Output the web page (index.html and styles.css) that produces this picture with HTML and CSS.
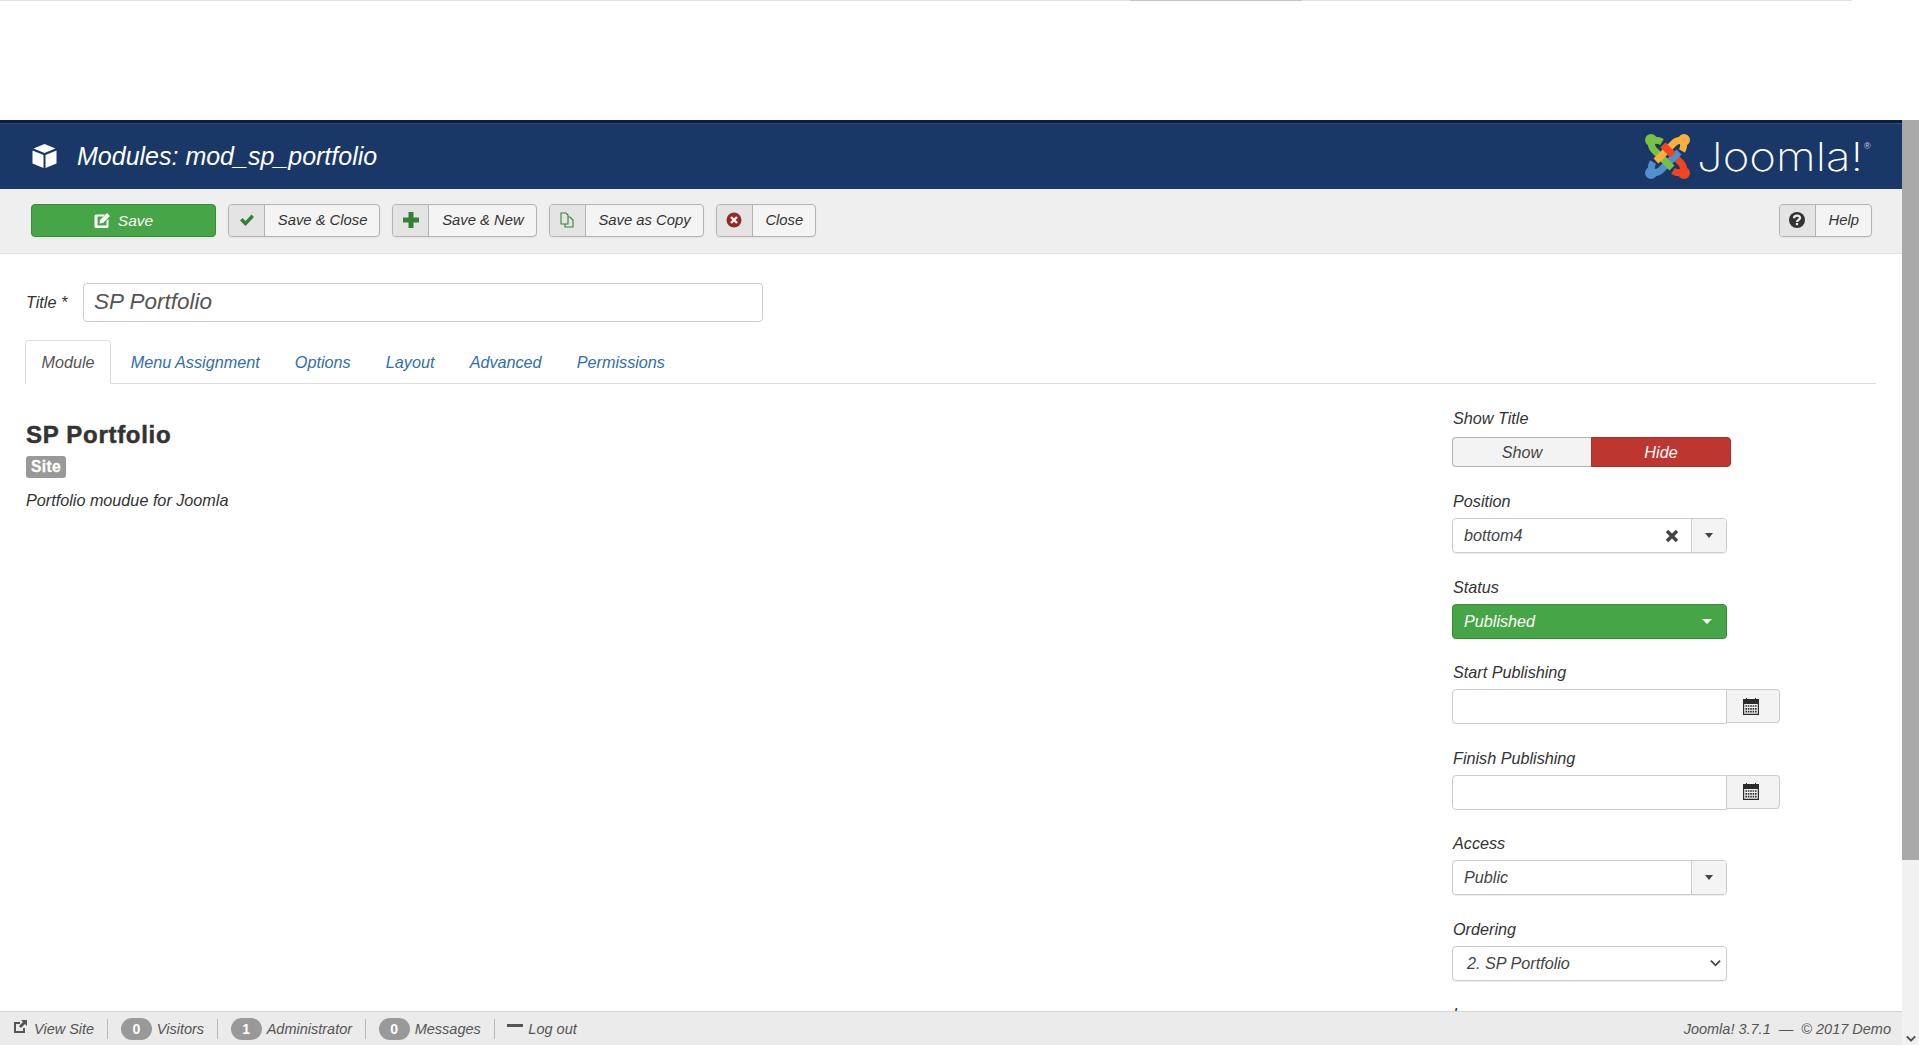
FILE: index.html
```html
<!DOCTYPE html>
<html lang="en">
<head>
<meta charset="UTF-8">
<meta name="viewport" content="width=device-width, initial-scale=1.0">
<title>Modules: mod_sp_portfolio</title>
<link rel="stylesheet" href="styles.css">
</head>
<body>

<div class="top-strip"><span class="top-strip-mark"></span></div>

<div class="frame">
  <div class="admin">

    <header class="header">
      <svg class="cube" viewBox="0 0 24 24"><path fill="#fff" d="M12 0l11 4.500L12 9 1 4.500zM0 6.500l11 4.500v13L0 19.500zM24 6.500V19.500L13 24V11z"/></svg>
      <h1 class="page-title">Modules: mod_sp_portfolio</h1>
      <svg class="logo" viewBox="0 0 45 45">
        <defs>
          <g id="joint" fill="none" stroke-width="7">
            <path d="M6 6C7 9 5 12 9 16L27 34"/>
            <path d="M6 6C10 7 12 5 17 8"/>
            <circle cx="6" cy="6" r="3" fill="currentColor" stroke="currentColor" stroke-width="6"/>
          </g>
        </defs>
        <use href="#joint" stroke="#f44321" color="#f44321" transform="rotate(180 22.500 22.500)"/>
        <use href="#joint" stroke="#5091cd" color="#5091cd" transform="rotate(270 22.500 22.500)"/>
        <use href="#joint" stroke="#7ac143" color="#7ac143"/>
        <use href="#joint" stroke="#fbb03b" color="#fbb03b" transform="rotate(90 22.500 22.500)"/>
        <path d="M18 11L28 21" fill="none" stroke="#f44321" stroke-width="7"/>
      </svg>
      <svg class="wordmark" viewBox="0 0 176 48">
        <text class="wordmark-text" x="-1" y="39" textLength="166" lengthAdjust="spacingAndGlyphs">Joomla!</text>
        <text class="wordmark-reg" x="166" y="17">®</text>
      </svg>
    </header>

    <div class="toolbar">
      <a class="btn btn-save">
        <svg class="ic-save" viewBox="0 0 16 16"><path fill="#fff" d="M2 1.500h9l-2 2H3.500v9h9V8l2-2v7.500A1.500 1.500 0 0 1 13 15H2a1.500 1.500 0 0 1-1.500-1.500V3A1.500 1.500 0 0 1 2 1.500zM13 0l3 3-7 7-3.500.5L6 7z"/></svg>
        Save
      </a>
      <a class="btn">
        <span class="btn-ic"><svg class="ic" viewBox="0 0 16 16"><path fill="#378137" d="M1 8.500l2.500-2.500 3 3L12.500 2.500 15 5 6.500 14z"/></svg></span>
        <span class="btn-tx">Save &amp; Close</span>
      </a>
      <a class="btn">
        <span class="btn-ic"><svg class="ic" viewBox="0 0 16 16"><path fill="#378137" d="M5.500 0h5v5.500H16v5h-5.500V16h-5v-5.500H0v-5h5.500z"/></svg></span>
        <span class="btn-tx">Save &amp; New</span>
      </a>
      <a class="btn">
        <span class="btn-ic"><svg class="ic" viewBox="0 0 16 16"><path fill="none" stroke="#378137" stroke-width="1.100" d="M2 1h5l2 2v9H2zM9 5h2l3 3v7H6v-3"/></svg></span>
        <span class="btn-tx">Save as Copy</span>
      </a>
      <a class="btn">
        <span class="btn-ic"><svg class="ic" viewBox="0 0 16 16"><circle cx="8" cy="8" r="7.500" fill="#942a25"/><path stroke="#f3f3f3" stroke-width="2.400" d="M5 5l6 6M11 5l-6 6"/></svg></span>
        <span class="btn-tx">Close</span>
      </a>
      <a class="btn btn-help">
        <span class="btn-ic"><svg class="ic" viewBox="0 0 16 16"><circle cx="8" cy="8" r="8" fill="#333"/><path fill="none" stroke="#efefef" stroke-width="2.200" d="M5 6.200C5 4.500 6.500 3.600 8 3.600s3 .9 3 2.400c0 2-3 2-3 3.900"/><rect x="6.900" y="11" width="2.200" height="2.200" fill="#efefef"/></svg></span>
        <span class="btn-tx">Help</span>
      </a>
    </div>

    <main class="content">
      <div class="title-row">
        <label class="title-label">Title *</label>
        <div class="title-input">SP Portfolio</div>
      </div>

      <ul class="tabs">
        <li class="tab active">Module</li>
        <li class="tab">Menu Assignment</li>
        <li class="tab">Options</li>
        <li class="tab">Layout</li>
        <li class="tab">Advanced</li>
        <li class="tab">Permissions</li>
      </ul>

      <div class="columns">
        <div class="details">
          <h2 class="details-title">SP Portfolio</h2>
          <span class="label-site">Site</span>
          <p class="details-desc">Portfolio moudue for Joomla</p>
        </div>

        <div class="side">
          <div class="field field-first">
            <label>Show Title</label>
            <div class="toggle">
              <span class="toggle-show">Show</span>
              <span class="toggle-hide">Hide</span>
            </div>
          </div>
          <div class="field">
            <label>Position</label>
            <div class="chosen">
              <span class="chosen-val">bottom4</span>
              <svg class="chosen-x" viewBox="0 0 14 14"><path stroke="#444" stroke-width="3.400" d="M2 2l10 10M12 2L2 12"/></svg>
              <span class="chosen-arrow"><i class="caret"></i></span>
            </div>
          </div>
          <div class="field">
            <label>Status</label>
            <div class="chosen chosen-green">
              <span class="chosen-val">Published</span>
              <i class="caret caret-white"></i>
            </div>
          </div>
          <div class="field">
            <label>Start Publishing</label>
            <div class="date">
              <div class="date-input"></div>
              <span class="date-btn">
                <svg class="ic-cal" viewBox="0 0 16 17"><path fill="#2b2b2b" fill-rule="evenodd" d="M0 1h3V0h1v1h8V0h1v1h3v16H0zM1.200 6v9.800h13.600V6z"/><path stroke="#2b2b2b" stroke-width="1.700" stroke-dasharray="1.600 .8" d="M2.400 8h11.200M2.400 10.800h11.200M2.400 13.600h11.200"/></svg>
              </span>
            </div>
          </div>
          <div class="field">
            <label>Finish Publishing</label>
            <div class="date">
              <div class="date-input"></div>
              <span class="date-btn">
                <svg class="ic-cal" viewBox="0 0 16 17"><path fill="#2b2b2b" fill-rule="evenodd" d="M0 1h3V0h1v1h8V0h1v1h3v16H0zM1.200 6v9.800h13.600V6z"/><path stroke="#2b2b2b" stroke-width="1.700" stroke-dasharray="1.600 .8" d="M2.400 8h11.200M2.400 10.800h11.200M2.400 13.600h11.200"/></svg>
              </span>
            </div>
          </div>
          <div class="field">
            <label>Access</label>
            <div class="chosen">
              <span class="chosen-val">Public</span>
              <span class="chosen-arrow"><i class="caret"></i></span>
            </div>
          </div>
          <div class="field">
            <label>Ordering</label>
            <div class="chosen chosen-select">
              <span class="chosen-val">2. SP Portfolio</span>
              <svg class="select-chev" viewBox="0 0 12 8"><path fill="none" stroke="#444" stroke-width="2" d="M1 1.500l5 5 5-5"/></svg>
            </div>
          </div>
          <div class="field">
            <label>Language</label>
          </div>
        </div>
      </div>
    </main>

    <footer class="status">
      <div class="status-left">
        <span class="status-item status-view">
          <svg class="ic-small" viewBox="0 0 14 14"><path fill="#555" d="M1 2h6v2H3v7h7V8h2v5H1zM8 0h6v6l-2-2-4 4-2-2 4-4z"/></svg>
          View Site
        </span>
        <span class="status-item"><b class="pill">0</b> Visitors</span>
        <span class="status-item"><b class="pill">1</b> Administrator</span>
        <span class="status-item"><b class="pill">0</b> Messages</span>
        <span class="status-item"><i class="minus"></i> Log out</span>
      </div>
      <div class="status-right">Joomla! 3.7.1 &nbsp;—&nbsp; © 2017 Demo</div>
    </footer>
  </div>

  <div class="scrollbar">
    <div class="scroll-thumb"></div>
    <svg class="scroll-down" viewBox="0 0 12 8"><path fill="none" stroke="#505050" stroke-width="2.400" d="M1 1.500l5 5 5-5"/></svg>
  </div>
</div>

</body>
</html>
```

FILE: styles.css
```css
* {
  box-sizing: border-box;
}
html, body {
  height: 100%;
}
body {
  margin: 0;
  overflow: hidden;
  background-color: #fff;
  color: #333;
  font-family: "Liberation Sans", Arial, sans-serif;
  font-size: 16.2px;
  font-style: italic;
  display: flex;
  flex-direction: column;
}

.top-strip {
  height: 120px;
  flex: none;
  border-top: 1px solid #dde4ec;
  margin-right: 67px;
  position: relative;
}
.top-strip-mark {
  position: absolute;
  top: -1px;
  left: 1130px;
  width: 172px;
  height: 1px;
  background-color: #c0c4c0;
}

.frame {
  flex: 1;
  display: flex;
  min-height: 0;
}
.admin {
  flex: 1;
  min-width: 0;
  display: flex;
  flex-direction: column;
}

/* header */
.header {
  height: 69px;
  flex: none;
  background-color: #1a3867;
  border-top: 3px solid #0a1f3f;
  box-shadow: inset 0 1px 0 #2b4a7a;
  display: flex;
  align-items: center;
  padding: 0 39px 0 32px;
}
.cube {
  width: 25px;
  height: 24px;
  flex: none;
}
.page-title {
  margin: 0 0 0 20px;
  flex: 1;
  color: #fff;
  font-size: 25px;
  font-weight: normal;
  line-height: 1;
}
.logo {
  width: 45px;
  height: 45px;
  flex: none;
  margin-top: 1px;
}
.wordmark {
  width: 176px;
  height: 48px;
  margin-left: 8px;
  margin-right: -11px;
  flex: none;
}
.wordmark-text {
  fill: #fff;
  font-family: Inter, "Open Sans", sans-serif;
  font-weight: 200;
  font-style: normal;
  font-size: 40px;
}
.wordmark-reg {
  fill: #c9d3e0;
  font-family: "Liberation Sans", sans-serif;
  font-style: normal;
  font-size: 9px;
}

/* toolbar */
.toolbar {
  height: 65px;
  flex: none;
  background-color: #efefef;
  border-bottom: 1px solid #dfdfdf;
  display: flex;
  align-items: flex-start;
  gap: 12px;
  padding: 15px 30px 0 31px;
}
.btn {
  height: 33px;
  display: flex;
  align-items: stretch;
  background-color: #f4f4f4;
  border: 1px solid #b3b3b3;
  border-radius: 4px;
  box-shadow: 0 1px 2px rgba(0,0,0,0.05);
  color: #333;
  font-size: 14.800px;
  line-height: 31px;
}
.btn-ic {
  width: 36px;
  flex: none;
  background-color: #e4e4e4;
  border-right: 1px solid #b3b3b3;
  border-radius: 3px 0 0 3px;
  display: flex;
  align-items: center;
  justify-content: center;
}
.btn-tx {
  padding: 0 12px 0 12.800px;
  white-space: nowrap;
}
.ic {
  width: 16px;
  height: 16px;
  margin-top: -2px;
}
.btn-save {
  width: 185px;
  align-items: center;
  justify-content: center;
  gap: 8px;
  background-color: #46a546;
  border-color: #3a8a3a;
  color: #fff;
  font-size: 15.500px;
}
.ic-save {
  width: 16px;
  height: 16px;
}
.btn-help {
  margin-left: auto;
}

/* content */
.content {
  flex: 1;
  min-height: 0;
  overflow: hidden;
  padding: 29px 26px 0 25px;
}
.title-row {
  display: flex;
  align-items: center;
  height: 39px;
}
.title-label {
  width: 58px;
  padding-left: 1px;
}
.title-input {
  width: 680px;
  height: 39px;
  border: 1px solid #ccc;
  border-radius: 4px;
  padding: 0 10px;
  font-size: 22.500px;
  line-height: 35px;
  color: #555;
}

.tabs {
  display: flex;
  list-style: none;
  margin: 18px 0 0;
  padding: 0;
  height: 44px;
  border-bottom: 1px solid #ddd;
}
.tab {
  padding: 0 17.600px;
  line-height: 44px;
  color: #2f6fad;
}
.tab.active {
  color: #555;
  padding: 0 15.500px;
  margin-right: 2px;
  line-height: 42px;
  background-color: #fff;
  border: 1px solid #ddd;
  border-bottom-color: #fff;
  border-radius: 4px 4px 0 0;
  height: 44px;
}

.columns {
  display: flex;
  justify-content: space-between;
}
.details {
  padding-top: 37px;
  padding-left: 1px;
}
.details-title {
  margin: 0;
  font-size: 24px;
  font-style: normal;
  line-height: 28px;
  letter-spacing: .7px;
  -webkit-text-stroke: .5px #333;
}
.label-site {
  display: block;
  width: 40px;
  margin-top: 7px;
  background-color: #999;
  border-radius: 3px;
  color: #fff;
  font-size: 15.600px;
  font-weight: bold;
  font-style: normal;
  line-height: 22px;
  letter-spacing: .3px;
  text-align: center;
  -webkit-text-stroke: .3px #fff;
}
.details-desc {
  margin: 13px 0 0;
}

.side {
  width: 424px;
  padding-top: 24px;
}
.field {
  height: 85.500px;
}
.field-first {
  height: 83px;
}
.field label {
  display: block;
  height: 27px;
  padding-left: 1px;
  line-height: 20px;
  color: #333;
}

.toggle {
  width: 279px;
  height: 30px;
  margin-top: 2px;
  display: flex;
  text-align: center;
  line-height: 28px;
}
.toggle-show {
  width: 139px;
  background-color: #f3f3f3;
  border: 1px solid #b3b3b3;
  border-right: 0;
  border-radius: 4px 0 0 4px;
  color: #444;
}
.toggle-hide {
  flex: 1;
  background-color: #bd362f;
  border: 1px solid #a82f29;
  border-radius: 0 4px 4px 0;
  color: #fff;
}

.chosen {
  width: 275px;
  height: 35px;
  border: 1px solid #ccc;
  border-radius: 4px;
  display: flex;
  align-items: center;
  padding-left: 11px;
  color: #444;
  box-shadow: 0 1px 1px rgba(0,0,0,0.08);
}
.chosen-val {
  flex: 1;
}
.chosen-x {
  width: 14px;
  height: 14px;
  margin-right: 12px;
}
.chosen-arrow {
  width: 35px;
  height: 100%;
  background-color: #f4f4f4;
  border-left: 1px solid #ccc;
  border-radius: 0 3px 3px 0;
  display: flex;
  align-items: center;
  justify-content: center;
}
.caret {
  display: block;
  width: 0;
  height: 0;
  border-style: solid;
  border-width: 5px 4.500px 0;
  border-color: #444 transparent transparent;
}
.chosen-green {
  background-color: #46a546;
  border-color: #3a8a3a;
  color: #fff;
  padding-right: 14px;
}
.caret-white {
  border-width: 5px 5px 0;
  border-top-color: #fff;
}
.chosen-select {
  padding-left: 14px;
  padding-right: 5px;
}
.select-chev {
  width: 11px;
  height: 8px;
}

.date {
  display: flex;
  align-items: flex-start;
  width: 328px;
  height: 35px;
}
.date-input {
  width: 275px;
  height: 35px;
  border: 1px solid #ccc;
  border-radius: 4px 0 0 4px;
}
.date-btn {
  flex: 1;
  height: 34px;
  padding-right: 4px;
  background-color: #f3f3f3;
  border: 1px solid #ccc;
  border-left: 0;
  border-radius: 0 4px 4px 0;
  display: flex;
  align-items: center;
  justify-content: center;
}
.ic-cal {
  width: 16px;
  height: 17px;
}

/* status bar */
.status {
  height: 34px;
  flex: none;
  background-color: #ebebeb;
  border-top: 1px solid #d5d5d5;
  display: flex;
  align-items: center;
  justify-content: space-between;
  padding: 0 11px 0 0;
  color: #555;
  font-size: 14.500px;
}
.status-left {
  display: flex;
  align-items: center;
}
.status-item {
  display: flex;
  align-items: center;
  gap: 5px;
  height: 20px;
  padding: 0 12.800px;
  border-right: 1px solid #b8b8b8;
}
.status-item:first-child {
  padding-left: 13px;
}
.status-item:last-child {
  border-right: 0;
}
.status-view {
  gap: 7px;
}
.ic-small {
  width: 14px;
  height: 14px;
  margin-top: -4px;
}
.pill {
  display: inline-block;
  width: 31px;
  height: 22px;
  background-color: #999;
  border-radius: 11px;
  color: #fff;
  font-size: 14px;
  font-style: normal;
  line-height: 22px;
  text-align: center;
}
.minus {
  display: block;
  width: 16px;
  height: 3px;
  background-color: #555;
  margin-top: -6px;
}

/* scrollbar */
.scrollbar {
  width: 17px;
  flex: none;
  background-color: #f1f1f1;
  display: flex;
  flex-direction: column;
  justify-content: space-between;
}
.scroll-thumb {
  height: 740px;
  background-color: #a8a8a8;
}
.scroll-down {
  width: 10px;
  height: 7px;
  margin: 0 auto 3px;
}
```
